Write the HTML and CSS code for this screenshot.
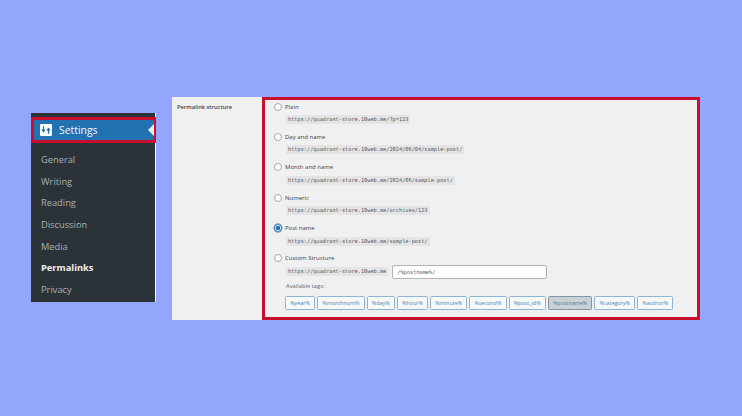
FILE: index.html
```html
<!DOCTYPE html>
<html lang="en">
<head>
<meta charset="utf-8">
<title>Permalink settings</title>
<link rel="stylesheet" href="styles.css">
</head>
<body>
<div class="stage">
  <nav class="sidebar">
    <div class="current">
      <svg class="gear" viewBox="0 0 12 12" width="12" height="12"><rect width="12" height="12" rx="1.2" fill="#fff"/><path d="M3.500 2.200v5M2 5.700l1.500 1.800 1.500-1.800M8.500 9.800v-5M7 6.300l1.500-1.800 1.500 1.800" fill="none" stroke="#2271b1" stroke-width="1.300"/></svg>
      <span>Settings</span>
      <i class="arrow"></i>
    </div>
    <ul class="submenu">
      <li>General</li>
      <li>Writing</li>
      <li>Reading</li>
      <li>Discussion</li>
      <li>Media</li>
      <li class="on">Permalinks</li>
      <li>Privacy</li>
    </ul>
  </nav>
  <section class="panel">
    <div class="label">Permalink structure</div>
    <div class="options">
      <div class="opt"><div class="line"><i class="radio"></i><span>Plain</span></div><code>https://quadrant-store.10web.me/?p=123</code></div>
      <div class="opt"><div class="line"><i class="radio"></i><span>Day and name</span></div><code>https://quadrant-store.10web.me/2024/06/04/sample-post/</code></div>
      <div class="opt"><div class="line"><i class="radio"></i><span>Month and name</span></div><code>https://quadrant-store.10web.me/2024/06/sample-post/</code></div>
      <div class="opt"><div class="line"><i class="radio"></i><span>Numeric</span></div><code>https://quadrant-store.10web.me/archives/123</code></div>
      <div class="opt"><div class="line"><i class="radio checked"></i><span>Post name</span></div><code>https://quadrant-store.10web.me/sample-post/</code></div>
      <div class="opt custom">
        <div class="line"><i class="radio"></i><span>Custom Structure</span></div>
        <div class="struct"><code>https://quadrant-store.10web.me</code><div class="input">/%postname%/</div></div>
        <div class="avail">Available tags:</div>
        <div class="tags">
          <b>%year%</b><b>%monthnum%</b><b>%day%</b><b>%hour%</b><b>%minute%</b><b>%second%</b><b>%post_id%</b><b class="active">%postname%</b><b>%category%</b><b>%author%</b>
        </div>
      </div>
    </div>
  </section>
</div>
</body>
</html>
```
FILE: styles.css
```css
* { box-sizing: border-box; }
html, body { margin: 0; height: 100%; }
body { background: #94a6fc; font-family: "Open Sans", "Noto Sans", sans-serif; overflow: hidden; }
.stage { display: flex; align-items: flex-start; gap: 16px; padding: 97px 0 0 31px; }
.sidebar { width: 125px; height: 189px; margin-top: 16px; background: #2c3338; border-right: 1px solid #eef0fb; padding-top: 4px; }
.current { height: 26px; background: #2271b1; border: 3px solid #c8102e; border-right-width: 2px; display: flex; align-items: center; padding-left: 6px; color: #f4f7fa; font-size: 10.400px; gap: 7px; position: relative; margin-right: -1px; }
.gear { flex: none; }
.arrow { position: absolute; right: 0; top: 4px; width: 0; height: 0; border: 6px solid transparent; border-left-width: 0; border-right: 6px solid #f0f0f1; }
.submenu { list-style: none; margin: 6px 0 0; padding: 0 0 0 10px; }
.submenu li { height: 21.700px; line-height: 21.700px; font-size: 9.300px; color: #a9afb4; }
.submenu .on { color: #f0f0f1; font-weight: 700; }
.panel { width: 528px; height: 223px; background: #f0f0f1; display: flex; }
.label { width: 90px; padding: 6px 0 0 5px; font-size: 5.700px; font-weight: 600; color: #3c434a; }
.options { width: 438px; height: 223px; border: 3px solid #c8102e; padding: 2px 0 0 9px; }
.opt { height: 30.400px; }
.line { display: flex; align-items: center; gap: 3px; height: 9px; font-size: 6px; color: #3c434a; }
.radio { width: 8px; height: 8px; border-radius: 50%; border: 1px solid #a4a7ab; background: #fff; flex: none; }
.radio.checked { border-color: #2271b1; box-shadow: 0 0 0 .5px #2271b1; background: radial-gradient(circle, #2271b1 0 2px, #fff 2.500px); }
code { display: inline-block; margin: 4px 0 0 12px; background: #e4e4e5; padding: 1px 2px; font: 5.270px/7px "DejaVu Sans Mono", monospace; color: #50575e; vertical-align: top; }
.struct { display: flex; align-items: center; gap: 4px; margin-top: 2px; }
.struct code { margin-top: 0; }
.input { width: 155px; height: 14px; background: #fff; border: 1px solid #b0b3b7; border-radius: 2px; padding-left: 4px; font: 5.270px/12px "DejaVu Sans Mono", monospace; color: #50575e; }
.avail { font-size: 5.800px; color: #646970; margin: 3px 0 0 12px; line-height: 9px; }
.tags { display: flex; gap: 2px; margin: 5px 0 0 11px; }
.tags b { height: 14px; padding: 0 4.150px; border: 1px solid #8db4d2; border-radius: 1.500px; background: #f6f7f7; font-size: 5.400px; font-weight: 400; line-height: 12px; color: #4a86b5; }
.tags .active { background: #c9d0d6; border-color: #8296a5; color: #5a7f9c; }
```
